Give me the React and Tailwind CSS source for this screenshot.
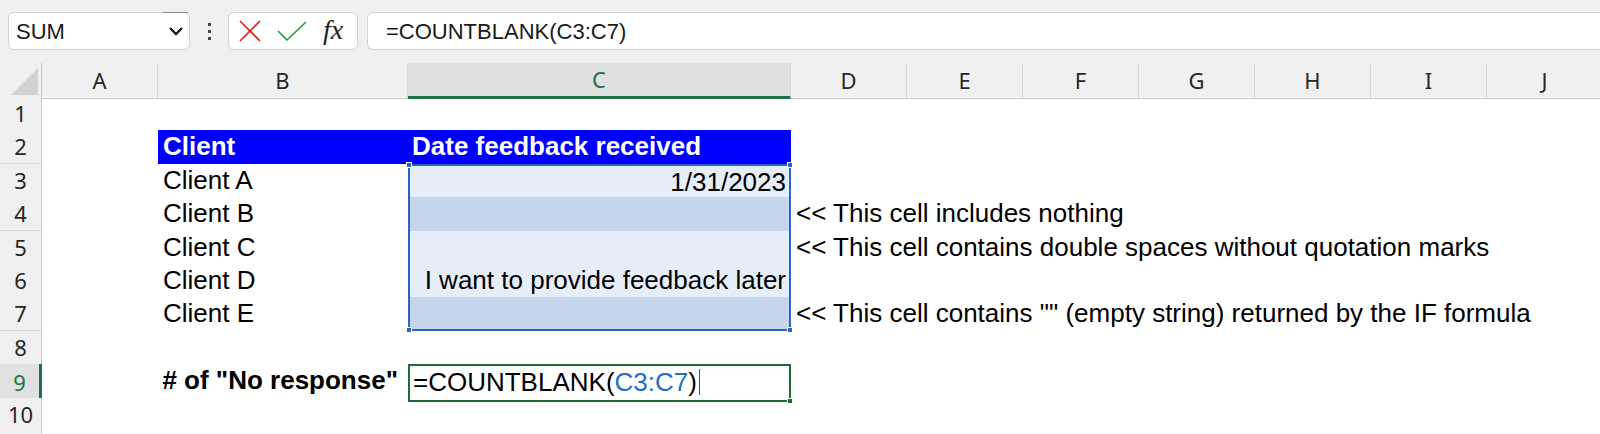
import React from "react";

const COLS = ["A", "B", "C", "D", "E", "F", "G", "H", "I", "J"];
const GRID = "grid grid-cols-[42px_116px_250px_383px_repeat(7,116px)]";
const CELL_FONT = "font-['Liberation_Sans',Arial,sans-serif] text-[26px] leading-[33.4px] text-black";

// selection on C3:C7
const SEL = "border-[#2a63c2]";
const LIGHT = "bg-[#e5eef9]";
const DARK = "bg-[#c5d5ec]";

const Handle = ({ pos }) => (
    <span className={`absolute w-[6px] h-[6px] bg-[#2a63c2] border border-white ${pos}`} />
);

const rows = [
    { n: 1, cells: {} },
    {
        n: 2,
        cells: {
            B: { text: "Client", cls: "bg-[#0000ff] text-white font-bold pl-[5px]" },
            C: { text: "Date feedback received", cls: "bg-[#0000ff] text-white font-bold pl-[4px]" },
        },
    },
    {
        n: 3,
        cells: {
            B: { text: "Client A", cls: "pl-[5px]" },
            C: {
                text: "1/31/2023",
                cls: `${LIGHT} border-x-2 border-t-2 ${SEL} text-right pr-[3px] leading-[31.4px]`,
                handles: ["-top-[4px] -left-[4px]", "-top-[4px] -right-[4px]"],
            },
        },
    },
    {
        n: 4,
        cells: {
            B: { text: "Client B", cls: "pl-[5px]" },
            C: { text: "", cls: `${DARK} border-x-2 ${SEL}` },
            D: { text: "<< This cell includes nothing", cls: "pl-[5px]" },
        },
    },
    {
        n: 5,
        cells: {
            B: { text: "Client C", cls: "pl-[5px]" },
            C: { text: "", cls: `${LIGHT} border-x-2 ${SEL}` },
            D: { text: "<< This cell contains double spaces without quotation marks", cls: "pl-[5px]" },
        },
    },
    {
        n: 6,
        cells: {
            B: { text: "Client D", cls: "pl-[5px]" },
            C: { text: "I want to provide feedback later", cls: `${LIGHT} border-x-2 ${SEL} text-right pr-[3px]` },
        },
    },
    {
        n: 7,
        cells: {
            B: { text: "Client E", cls: "pl-[5px]" },
            C: {
                text: "",
                cls: `${DARK} border-x-2 border-b-2 ${SEL}`,
                handles: ["-bottom-[4px] -left-[4px]", "-bottom-[4px] -right-[4px]"],
            },
            D: { text: '<< This cell contains "" (empty string) returned by the IF formula', cls: "pl-[5px]" },
        },
    },
    { n: 8, cells: {} },
    {
        n: 9,
        cells: {
            B: { text: '# of "No response"', cls: "font-bold text-right pr-[10px]" },
            C: { formula: true, cls: "border-2 border-[#1e6b37] pl-[3px] leading-[29.4px]" },
        },
    },
    { n: 10, cells: {} },
    { n: 11, cells: {}, hidden: true },
];

const FormulaBar = () => (
    <div className="h-[63px] flex items-start pt-[12px] pl-[8px] gap-0 bg-[#f0f0f0]">
        {/* name box */}
        <div className="w-[182px] h-[38px] bg-white border border-[#d3d3d3] rounded-[6px] flex items-center justify-between pl-[7px]">
            <span className="font-['Liberation_Sans',Arial,sans-serif] text-[22px] text-[#1a1a1a]">SUM</span>
            <div className="self-stretch w-[25px] -mt-px border-t border-[#8c8c8c] flex items-center justify-center mr-[1px]">
                <svg width="16" height="10" viewBox="0 0 16 10">
                    <polyline points="2,2 8,8 14,2" fill="none" stroke="#1a1a1a" strokeWidth="2.4" />
                </svg>
            </div>
        </div>
        {/* dots */}
        <div className="w-[38px] h-[38px] flex flex-col items-center justify-center gap-[4px]">
            <span className="w-[3px] h-[3px] bg-[#444]" />
            <span className="w-[3px] h-[3px] bg-[#444]" />
            <span className="w-[3px] h-[3px] bg-[#444]" />
        </div>
        {/* cancel / enter / fx */}
        <div className="w-[130px] h-[38px] bg-white border border-[#d3d3d3] rounded-[6px] flex items-center pl-[10px] gap-[16px]">
            <svg width="22" height="22" viewBox="0 0 22 22">
                <line x1="1" y1="1" x2="21" y2="21" stroke="#e81c1c" strokeWidth="1.6" />
                <line x1="21" y1="1" x2="1" y2="21" stroke="#e81c1c" strokeWidth="1.6" />
            </svg>
            <svg width="30" height="21" viewBox="0 0 30 21">
                <polyline points="1,10 10,19 29,1" fill="none" stroke="#1f9b3f" strokeWidth="1.6" />
            </svg>
            <span className="font-['Liberation_Serif',serif] italic text-[28px] leading-none text-[#222] -mt-[2px]">fx</span>
        </div>
        {/* formula input */}
        <div className="ml-[9px] flex-1 h-[38px] bg-white border border-[#d3d3d3] rounded-l-[6px] border-r-0 flex items-center pl-[18px]">
            <span className="font-['Liberation_Sans',Arial,sans-serif] text-[22px] text-[#1a1a1a]">=COUNTBLANK(C3:C7)</span>
        </div>
    </div>
);

const ColumnHeaders = () => (
    <div className={`${GRID} h-[34px] bg-[#f0f0f0] font-['Noto_Sans',sans-serif] text-[22px] text-[#262626]`}>
        <div className="border-r border-b border-[#c8c8c8] flex items-end justify-end pr-[3px] pb-[3px]">
            <svg width="27" height="27" viewBox="0 0 27 27">
                <polygon points="27,0 27,27 0,27" fill="#d2d2d2" />
            </svg>
        </div>
        {COLS.map((c) =>
            c === "C" ? (
                <div
                    key={c}
                    className="bg-[#e0e0e0] border-b-[3px] border-[#1e7145] border-r border-r-[#d6d6d6] text-[#1e7145] flex items-center justify-center"
                >
                    {c}
                </div>
            ) : (
                <div key={c} className="border-r border-[#d9d9d9] border-b border-b-[#c8c8c8] flex items-center justify-center">
                    {c}
                </div>
            )
        )}
    </div>
);

const Formula = () => (
    <span className="whitespace-nowrap">
        =COUNTBLANK(<span className="text-[#1f6dc8]">C3:C7</span>)
        <span className="inline-block w-px h-[26px] bg-[#555] align-middle ml-[2px] -mt-[4px]" />
    </span>
);

const Row = ({ row }) => {
    const active = row.n === 9;
    return (
        <div className={`${GRID} h-[33.4px]`}>
            <div
                className={`flex items-center justify-center font-['Noto_Sans',sans-serif] text-[22px] border-b border-[#dadada] ${
                    active
                        ? "bg-[#e1e1e1] text-[#1e7145] border-r-[3px] border-r-[#1e7145]"
                        : "bg-[#f0f0f0] text-[#262626] border-r border-r-[#c8c8c8]"
                }`}
            >
                {row.hidden ? "" : row.n}
            </div>
            {COLS.map((c) => {
                const cell = row.cells[c];
                if (!cell) return <div key={c} />;
                return (
                    <div key={c} className={`relative whitespace-nowrap ${CELL_FONT} ${cell.cls}`}>
                        {cell.formula ? <Formula /> : cell.text}
                        {cell.handles && cell.handles.map((h) => <Handle key={h} pos={h} />)}
                        {cell.formula && (
                            <span className="absolute -bottom-[4px] -right-[4px] w-[6px] h-[6px] bg-[#1e6b37] border border-white" />
                        )}
                    </div>
                );
            })}
        </div>
    );
};

const App = () => {
    return (
        <div className="w-[1600px] h-[434px] overflow-hidden bg-white">
            <FormulaBar />
            <ColumnHeaders />
            {rows.map((r) => (
                <Row key={r.n} row={r} />
            ))}
        </div>
    );
};

export default App;
